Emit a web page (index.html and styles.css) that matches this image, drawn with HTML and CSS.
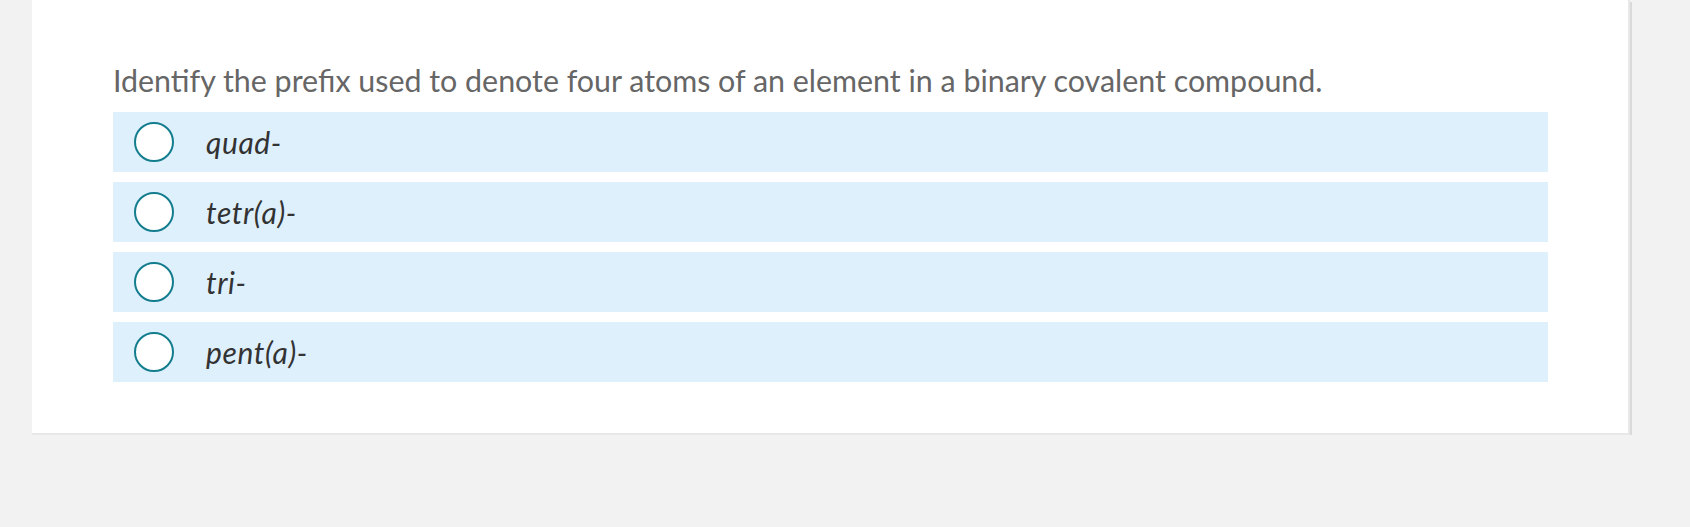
FILE: index.html
```html
<!DOCTYPE html>
<html lang="en">
<head>
<meta charset="utf-8">
<title>Question</title>
<link rel="stylesheet" href="styles.css">
</head>
<body>
<div class="card">
  <p class="question">Identify the prefix used to denote four atoms of an element in a binary covalent compound.</p>
  <ul class="options">
    <li class="option"><span class="radio"></span><span class="label">quad-</span></li>
    <li class="option"><span class="radio"></span><span class="label">tetr(a)-</span></li>
    <li class="option"><span class="radio"></span><span class="label">tri-</span></li>
    <li class="option"><span class="radio"></span><span class="label">pent(a)-</span></li>
  </ul>
</div>
</body>
</html>
```
FILE: styles.css
```css
html, body {
  margin: 0;
  padding: 0;
  background: #f2f2f2;
  font-family: Lato, "Open Sans", sans-serif;
}
.card {
  margin-left: 32px;
  width: 1598px;
  background: #ffffff;
  padding: 60px 80px 51px 81px;
  box-sizing: border-box;
  border-right: 2px solid #e8e8e8;
  border-bottom: 2px solid #e8e8e8;
  box-shadow: 2px 2px 0 #dadada;
}
.question {
  margin: 0 0 12px 0;
  font-size: 30.4px;
  line-height: 40px;
  color: #666666;
}
.options {
  list-style: none;
  margin: 0;
  padding: 0;
  display: flex;
  flex-direction: column;
  gap: 10px;
}
.option {
  height: 60px;
  background: #dff0fd;
  display: flex;
  align-items: center;
  padding-left: 21px;
  gap: 32px;
}
.radio {
  width: 40px;
  height: 40px;
  box-sizing: border-box;
  border: 2.5px solid #137d8e;
  border-radius: 50%;
  background: #ffffff;
  flex: none;
}
.label {
  font-style: italic;
  font-size: 30px;
  letter-spacing: 0.6px;
  color: #333333;
}
```
